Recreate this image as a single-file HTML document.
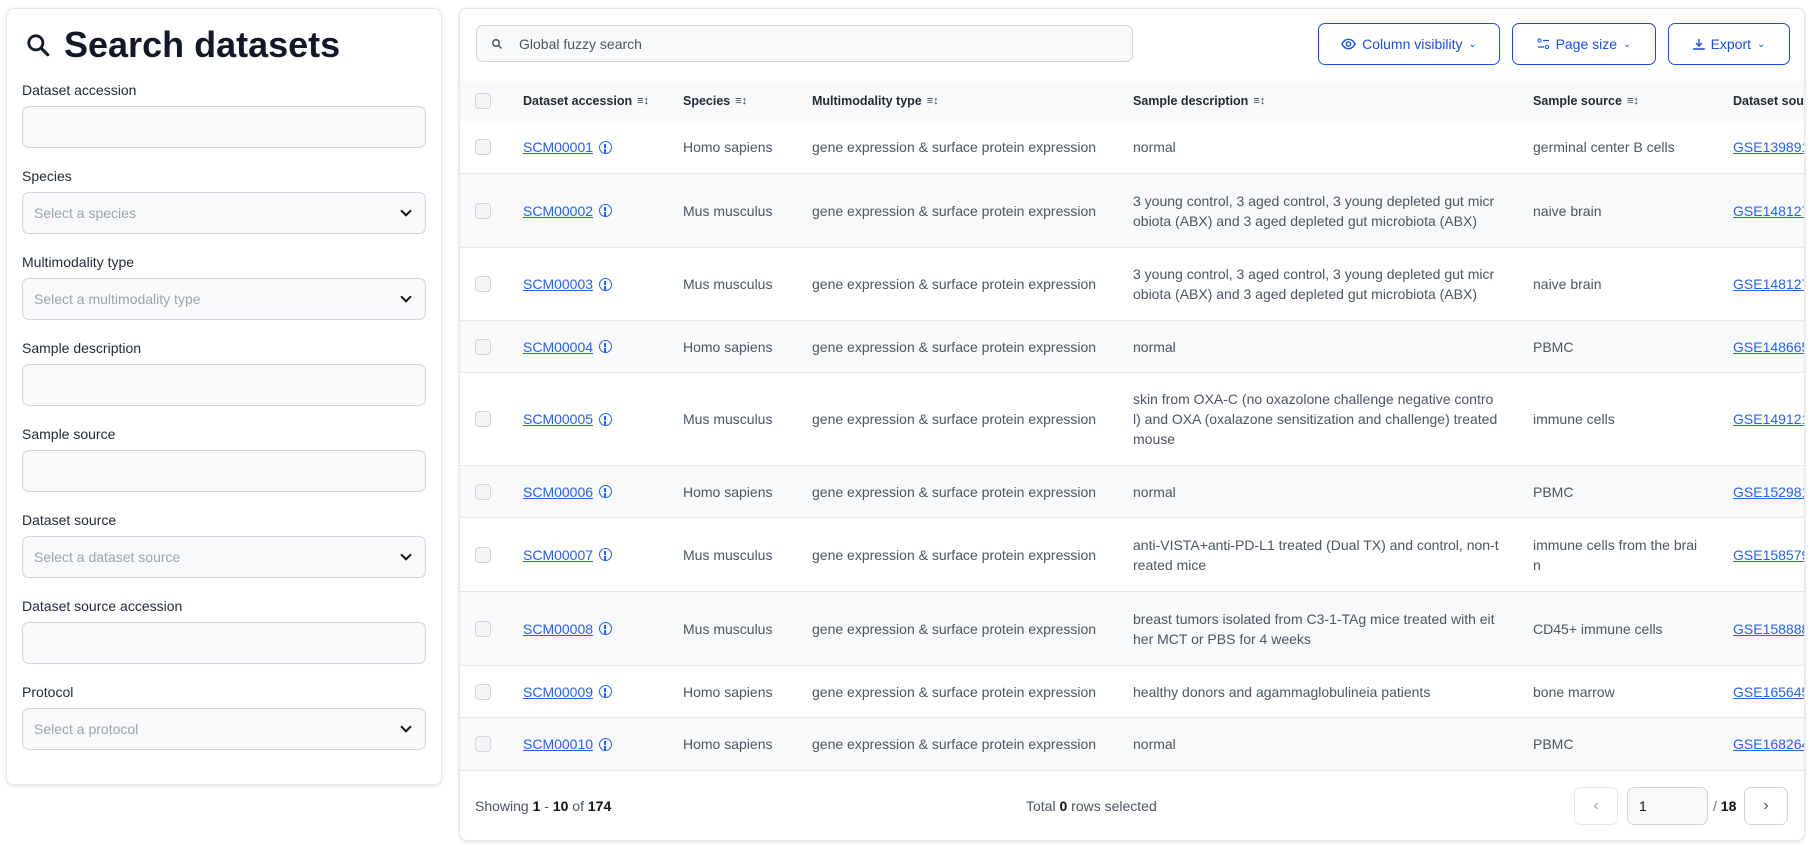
<!DOCTYPE html>
<html><head><meta charset="utf-8">
<style>
*{box-sizing:border-box;margin:0;padding:0}
body{width:1811px;height:848px;background:#fff;font-family:"Liberation Sans",Arial,sans-serif;position:relative;overflow:hidden;color:#1f2937}
.lp{position:absolute;left:6px;top:8px;width:436px;height:777px;border:1px solid #e5e7eb;border-radius:8px;box-shadow:0 1px 4px rgba(0,0,0,.12);background:#fff}
.title{position:absolute;left:18px;top:15px;font-size:36px;font-weight:bold;color:#111827;display:flex;align-items:center}
.title svg{margin-right:13px}
.lbl{position:absolute;left:15px;font-size:14px;color:#1f2937}
.inp{position:absolute;left:15px;width:404px;height:42px;border:1px solid #d1d5db;border-radius:7px;background:#f8f9fa;font-size:14px;color:#9ca3af;padding:0 11px;display:flex;align-items:center;justify-content:space-between}
.chev{width:8px;height:8px;border-right:2px solid #111;border-bottom:2px solid #111;transform:rotate(45deg);margin-top:-4px;margin-right:4px}
.rp{position:absolute;left:459px;top:8px;width:1346px;height:833px;border:1px solid #e5e7eb;border-radius:8px;box-shadow:0 1px 4px rgba(0,0,0,.12);background:#fff;overflow:hidden}
.search{position:absolute;left:16px;top:16px;width:657px;height:37px;border:1px solid #d1d5db;border-radius:7px;background:#f8f9fa;font-size:14px;color:#4b5563;display:flex;align-items:center;padding-left:14px}
.btn{position:absolute;top:14px;height:42px;border:1px solid #1d4ed8;border-radius:7px;color:#1d4ed8;font-size:14px;display:flex;align-items:center;justify-content:center;gap:6px;background:#fff}
.row{position:absolute;left:0;width:1360px;border-bottom:1px solid #e5e7eb;font-size:14px;color:#4b5563}
.row.s{background:#f8f9fa}
.c{position:absolute;top:0;height:100%;display:flex;align-items:center;line-height:20px;white-space:nowrap}
.cb{position:absolute;left:15px;width:16px;height:16px;border:1px solid #d1d5db;border-radius:4px;background:#f3f4f6;top:50%;margin-top:-8px}
.hd{font-size:12.5px;font-weight:bold;color:#1f2937;background:#f8f9fa;border-bottom:none}
a{color:#2563eb;text-decoration:underline}
.info{display:inline-block;width:13px;height:13px;border:1.5px solid #2563eb;border-radius:50%;margin-left:6px;position:relative}
.info:after{content:"";position:absolute;left:4px;top:2px;width:1.5px;height:4px;background:#2563eb;box-shadow:0 5px 0 -0px #2563eb}
.sort{font-weight:normal;color:#374151;margin-left:5px;font-size:11px}
.pg{position:absolute;top:778px;height:38px;border:1px solid #d1d5db;border-radius:7px;display:flex;align-items:center;justify-content:center;font-size:16px;color:#6b7280}
</style></head><body>
<div class="lp">
 <div class="title"><svg width="26" height="26" viewBox="0 0 24 24"><circle cx="10" cy="10" r="6.5" fill="none" stroke="#111827" stroke-width="2.6"/><line x1="15" y1="15" x2="21" y2="21" stroke="#111827" stroke-width="2.8" stroke-linecap="round"/></svg>Search datasets</div>
 <div class="lbl" style="top:73px">Dataset accession</div><div class="inp" style="top:97px"></div>
 <div class="lbl" style="top:159px">Species</div><div class="inp" style="top:183px">Select a species<span class="chev"></span></div>
 <div class="lbl" style="top:245px">Multimodality type</div><div class="inp" style="top:269px">Select a multimodality type<span class="chev"></span></div>
 <div class="lbl" style="top:331px">Sample description</div><div class="inp" style="top:355px"></div>
 <div class="lbl" style="top:417px">Sample source</div><div class="inp" style="top:441px"></div>
 <div class="lbl" style="top:503px">Dataset source</div><div class="inp" style="top:527px">Select a dataset source<span class="chev"></span></div>
 <div class="lbl" style="top:589px">Dataset source accession</div><div class="inp" style="top:613px"></div>
 <div class="lbl" style="top:675px">Protocol</div><div class="inp" style="top:699px">Select a protocol<span class="chev"></span></div>
</div>
<div class="rp">
 <div class="search"><svg width="12" height="12" viewBox="0 0 24 24" style="margin-right:16px"><circle cx="10" cy="10" r="6.5" fill="none" stroke="#4b5563" stroke-width="3"/><line x1="15" y1="15" x2="21" y2="21" stroke="#4b5563" stroke-width="3"/></svg>Global fuzzy search</div>
 <div class="btn" style="left:858px;width:182px"><svg width="15" height="12" viewBox="0 0 16 12"><path d="M1 6C3 2 5.5 1 8 1s5 1 7 5c-2 4-4.5 5-7 5S3 10 1 6z" fill="none" stroke="#1d4ed8" stroke-width="1.5"/><circle cx="8" cy="6" r="2.3" fill="none" stroke="#1d4ed8" stroke-width="1.5"/></svg>Column visibility <span style="font-size:10px">&#8964;</span></div>
 <div class="btn" style="left:1052px;width:144px"><svg width="13" height="12" viewBox="0 0 13 12"><circle cx="2.5" cy="2.5" r="1.6" fill="none" stroke="#1d4ed8"/><line x1="6" y1="2.5" x2="12" y2="2.5" stroke="#1d4ed8" stroke-width="1.3"/><circle cx="10" cy="9" r="1.6" fill="none" stroke="#1d4ed8"/><line x1="1" y1="9" x2="7" y2="9" stroke="#1d4ed8" stroke-width="1.3"/></svg>Page size <span style="font-size:10px">&#8964;</span></div>
 <div class="btn" style="left:1208px;width:122px"><svg width="12" height="12" viewBox="0 0 12 12"><path d="M6 1v7M3 5l3 3 3-3M1 10v1h10v-1" fill="none" stroke="#1d4ed8" stroke-width="1.4"/></svg>Export <span style="font-size:10px">&#8964;</span></div>

 <div class="row hd" style="top:72px;height:40px">
  <div class="cb"></div>
  <div class="c" style="left:63px">Dataset accession<span class="sort">&#8801;&#8597;</span></div>
  <div class="c" style="left:223px">Species<span class="sort">&#8801;&#8597;</span></div>
  <div class="c" style="left:352px">Multimodality type<span class="sort">&#8801;&#8597;</span></div>
  <div class="c" style="left:673px">Sample description<span class="sort">&#8801;&#8597;</span></div>
  <div class="c" style="left:1073px">Sample source<span class="sort">&#8801;&#8597;</span></div>
  <div class="c" style="left:1273px">Dataset source</div>
 </div>

 <div class="row" style="top:112px;height:53px"><div class="cb"></div><div class="c" style="left:63px"><a>SCM00001</a><span class="info"></span></div><div class="c" style="left:223px">Homo sapiens</div><div class="c" style="left:352px">gene expression &amp; surface protein expression</div><div class="c" style="left:673px">normal</div><div class="c" style="left:1073px">germinal center B cells</div><div class="c" style="left:1273px"><a>GSE139891</a></div></div>
 <div class="row s" style="top:165px;height:74px"><div class="cb"></div><div class="c" style="left:63px"><a>SCM00002</a><span class="info"></span></div><div class="c" style="left:223px">Mus musculus</div><div class="c" style="left:352px">gene expression &amp; surface protein expression</div><div class="c" style="left:673px">3 young control, 3 aged control, 3 young depleted gut micr<br>obiota (ABX) and 3 aged depleted gut microbiota (ABX)</div><div class="c" style="left:1073px">naive brain</div><div class="c" style="left:1273px"><a>GSE148127</a></div></div>
 <div class="row" style="top:239px;height:73px"><div class="cb"></div><div class="c" style="left:63px"><a>SCM00003</a><span class="info"></span></div><div class="c" style="left:223px">Mus musculus</div><div class="c" style="left:352px">gene expression &amp; surface protein expression</div><div class="c" style="left:673px">3 young control, 3 aged control, 3 young depleted gut micr<br>obiota (ABX) and 3 aged depleted gut microbiota (ABX)</div><div class="c" style="left:1073px">naive brain</div><div class="c" style="left:1273px"><a>GSE148127</a></div></div>
 <div class="row s" style="top:312px;height:52px"><div class="cb"></div><div class="c" style="left:63px"><a>SCM00004</a><span class="info"></span></div><div class="c" style="left:223px">Homo sapiens</div><div class="c" style="left:352px">gene expression &amp; surface protein expression</div><div class="c" style="left:673px">normal</div><div class="c" style="left:1073px">PBMC</div><div class="c" style="left:1273px"><a>GSE148665</a></div></div>
 <div class="row" style="top:364px;height:93px"><div class="cb"></div><div class="c" style="left:63px"><a>SCM00005</a><span class="info"></span></div><div class="c" style="left:223px">Mus musculus</div><div class="c" style="left:352px">gene expression &amp; surface protein expression</div><div class="c" style="left:673px">skin from OXA-C (no oxazolone challenge negative contro<br>l) and OXA (oxalazone sensitization and challenge) treated<br>mouse</div><div class="c" style="left:1073px">immune cells</div><div class="c" style="left:1273px"><a>GSE149121</a></div></div>
 <div class="row s" style="top:457px;height:52px"><div class="cb"></div><div class="c" style="left:63px"><a>SCM00006</a><span class="info"></span></div><div class="c" style="left:223px">Homo sapiens</div><div class="c" style="left:352px">gene expression &amp; surface protein expression</div><div class="c" style="left:673px">normal</div><div class="c" style="left:1073px">PBMC</div><div class="c" style="left:1273px"><a>GSE152981</a></div></div>
 <div class="row" style="top:509px;height:74px"><div class="cb"></div><div class="c" style="left:63px"><a>SCM00007</a><span class="info"></span></div><div class="c" style="left:223px">Mus musculus</div><div class="c" style="left:352px">gene expression &amp; surface protein expression</div><div class="c" style="left:673px">anti-VISTA+anti-PD-L1 treated (Dual TX) and control, non-t<br>reated mice</div><div class="c" style="left:1073px">immune cells from the brai<br>n</div><div class="c" style="left:1273px"><a>GSE158579</a></div></div>
 <div class="row s" style="top:583px;height:74px"><div class="cb"></div><div class="c" style="left:63px"><a>SCM00008</a><span class="info"></span></div><div class="c" style="left:223px">Mus musculus</div><div class="c" style="left:352px">gene expression &amp; surface protein expression</div><div class="c" style="left:673px">breast tumors isolated from C3-1-TAg mice treated with eit<br>her MCT or PBS for 4 weeks</div><div class="c" style="left:1073px">CD45+ immune cells</div><div class="c" style="left:1273px"><a>GSE158888</a></div></div>
 <div class="row" style="top:657px;height:52px"><div class="cb"></div><div class="c" style="left:63px"><a>SCM00009</a><span class="info"></span></div><div class="c" style="left:223px">Homo sapiens</div><div class="c" style="left:352px">gene expression &amp; surface protein expression</div><div class="c" style="left:673px">healthy donors and agammaglobulineia patients</div><div class="c" style="left:1073px">bone marrow</div><div class="c" style="left:1273px"><a>GSE165645</a></div></div>
 <div class="row s" style="top:709px;height:53px"><div class="cb"></div><div class="c" style="left:63px"><a>SCM00010</a><span class="info"></span></div><div class="c" style="left:223px">Homo sapiens</div><div class="c" style="left:352px">gene expression &amp; surface protein expression</div><div class="c" style="left:673px">normal</div><div class="c" style="left:1073px">PBMC</div><div class="c" style="left:1273px"><a>GSE168264</a></div></div>

 <div style="position:absolute;left:15px;top:789px;font-size:14px;color:#4b5563">Showing <b style="color:#111">1</b> - <b style="color:#111">10</b> of <b style="color:#111">174</b></div>
 <div style="position:absolute;left:566px;top:789px;font-size:14px;color:#4b5563">Total <b style="color:#111">0</b> rows selected</div>
 <div class="pg" style="left:1114px;width:44px;border-color:#e5e7eb;color:#9ca3af">&#8249;</div>
 <div class="pg" style="left:1167px;width:81px;background:#f8f9fa;justify-content:flex-start;padding-left:11px;font-size:14px;color:#111">1</div>
 <div style="position:absolute;left:1253px;top:789px;font-size:14px;color:#111"><span style="color:#6b7280">/</span> <b>18</b></div>
 <div class="pg" style="left:1284px;width:44px;color:#4b5563">&#8250;</div>
</div>
</body></html>
